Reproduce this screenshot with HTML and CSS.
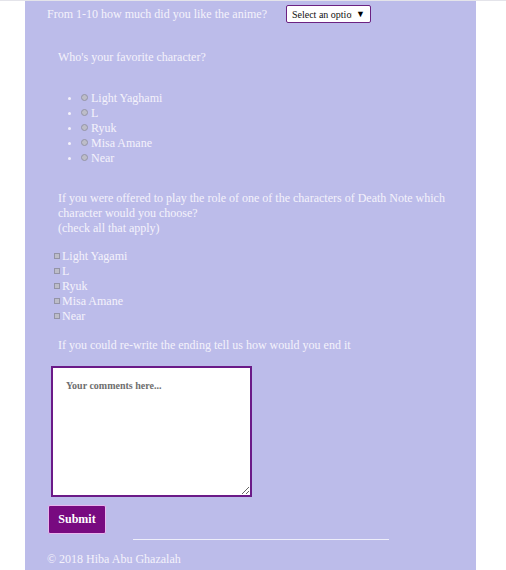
FILE: index.html
```html
<!DOCTYPE html>
<html>
<head>
<meta charset="utf-8">
<link rel="stylesheet" href="styles.css">
</head>
<body>
<div class="page">
  <form class="survey">
    <div class="row-rating">
      <label class="q">From 1-10 how much did you like the anime?</label>
      <span class="select-wrap">
        <select class="select"><option>Select an option</option></select>
      </span>
    </div>
    <p class="q indent fav">Who's your favorite character?</p>
    <ul class="radios">
      <li><input type="radio" name="fav"><span>Light Yaghami</span></li>
      <li><input type="radio" name="fav"><span>L</span></li>
      <li><input type="radio" name="fav"><span>Ryuk</span></li>
      <li><input type="radio" name="fav"><span>Misa Amane</span></li>
      <li><input type="radio" name="fav"><span>Near</span></li>
    </ul>
    <p class="q indent role">If you were offered to play the role of one of the characters of Death Note which character would you choose?<br>(check all that apply)</p>
    <div class="checks">
      <label><input type="checkbox"><span>Light Yagami</span></label>
      <label><input type="checkbox"><span>L</span></label>
      <label><input type="checkbox"><span>Ryuk</span></label>
      <label><input type="checkbox"><span>Misa Amane</span></label>
      <label><input type="checkbox"><span>Near</span></label>
    </div>
    <p class="q indent ending">If you could re-write the ending tell us how would you end it</p>
    <textarea class="comments" placeholder="Your comments here..."></textarea>
    <button type="submit" class="submit">Submit</button>
  </form>
  <hr class="rule">
  <footer class="footer">© 2018 Hiba Abu Ghazalah</footer>
</div>
</body>
</html>
```

FILE: styles.css
```css
html, body {
  margin: 0;
  padding: 0;
  background: #ffffff;
}
body {
  font-family: "Liberation Serif", "Times New Roman", serif;
  font-size: 12px;
  line-height: 15px;
  color: #f4f2fb;
  border-top: 1px solid #e4e4ea;
}
.page {
  width: 451px;
  margin-left: 25px;
  background: #bcbcea;
  padding-top: 4px;
  min-height: 569px;
  box-sizing: border-box;
}
.survey {
  display: flex;
  flex-direction: column;
  align-items: flex-start;
}
.q { margin: 0; }
.row-rating {
  display: flex;
  align-items: center;
  height: 18px;
  padding-left: 22px;
}
.select-wrap {
  position: relative;
  margin-left: 19px;
  display: inline-block;
}
.select {
  -webkit-appearance: none;
  appearance: none;
  width: 85px;
  height: 18px;
  box-sizing: border-box;
  border: 1px solid #6c2282;
  border-radius: 2px;
  background: #ffffff;
  color: #111;
  font-family: "Liberation Serif", "Times New Roman", serif;
  font-size: 10px;
  padding: 0 18px 0 5px;
  margin: 0;
  overflow: hidden;
}
.select-wrap::after {
  content: "▼";
  position: absolute;
  right: 6px;
  top: 3px;
  font-size: 9px;
  line-height: 12px;
  color: #000;
  pointer-events: none;
}
.indent { padding-left: 33px; }
.fav { margin-top: 27px; }
.radios {
  margin: 26px 0 0 0;
  padding: 0 0 0 56px;
  list-style: disc;
}
.radios li {
  height: 15px;
}
.radios li::marker { font-size: 10px; }
input[type="radio"], input[type="checkbox"] {
  -webkit-appearance: none;
  appearance: none;
  width: 6px;
  height: 6px;
  margin: 0 1px 0 0;
  vertical-align: 1px;
  background: #bdbdc8;
  border: 1px solid #9494a6;
  box-sizing: border-box;
}
input[type="radio"] {
  width: 7px;
  height: 7px;
  border-radius: 50%;
  margin-left: 0;
  margin-right: 3px;
}
.role {
  margin-top: 25px;
  width: 400px;
}
.checks {
  display: flex;
  flex-direction: column;
  margin-top: 13px;
  padding-left: 29px;
}
.checks label { height: 15px; }
.checks input { margin-right: 2px; }
.ending { margin-top: 14px; }
.comments {
  margin: 13px 0 0 26px;
  width: 201px;
  height: 131px;
  box-sizing: border-box;
  border: 2px solid #6b1a88;
  border-radius: 0;
  background: #ffffff;
  padding: 12px 13px;
  font-family: "Liberation Serif", "Times New Roman", serif;
  font-size: 10px;
  font-weight: bold;
  outline: none;
}
.comments::placeholder {
  color: #6e6e6e;
}
.submit {
  margin: 8px 0 0 23px;
  width: 58px;
  height: 29px;
  box-sizing: border-box;
  background: #780a80;
  color: #ffffff;
  border: 1px solid #e9b6ef;
  border-radius: 2px;
  font-family: "Liberation Serif", "Times New Roman", serif;
  font-size: 12px;
  font-weight: bold;
  padding: 0;
}
.rule {
  margin: 5px 0 0 108px;
  width: 256px;
  border: 0;
  border-top: 1px solid #eeeefa;
  height: 0;
}
.footer {
  margin-top: 12px;
  padding-left: 22px;
  line-height: 15px;
}
```
